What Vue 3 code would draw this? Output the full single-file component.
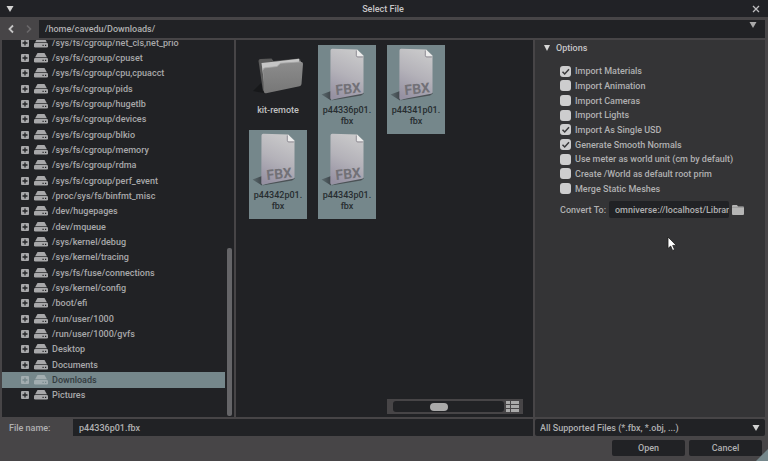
<script setup>
import { ref } from 'vue'

const path = ref('/home/cavedu/Downloads/')
const fileName = ref('p44336p01.fbx')
const target = ref('omniverse://localhost/Library')
const zoom = ref(40)
const current = ref('Downloads')
const optionsOpen = ref(true)

const places = [
  '/sys/fs/cgroup/net_cls,net_prio', '/sys/fs/cgroup/cpuset', '/sys/fs/cgroup/cpu,cpuacct',
  '/sys/fs/cgroup/pids', '/sys/fs/cgroup/hugetlb', '/sys/fs/cgroup/devices', '/sys/fs/cgroup/blkio',
  '/sys/fs/cgroup/memory', '/sys/fs/cgroup/rdma', '/sys/fs/cgroup/perf_event',
  '/proc/sys/fs/binfmt_misc', '/dev/hugepages', '/dev/mqueue', '/sys/kernel/debug',
  '/sys/kernel/tracing', '/sys/fs/fuse/connections', '/sys/kernel/config', '/boot/efi',
  '/run/user/1000', '/run/user/1000/gvfs', 'Desktop', 'Documents', 'Downloads', 'Pictures'
]

const files = ref([
  { lines: ['kit-remote'], folder: true, selected: false },
  { lines: ['p44336p01.', 'fbx'], selected: true },
  { lines: ['p44341p01.', 'fbx'], selected: true },
  { lines: ['p44342p01.', 'fbx'], selected: true },
  { lines: ['p44343p01.', 'fbx'], selected: true }
])

const options = ref([
  { label: 'Import Materials', on: true },
  { label: 'Import Animation', on: false },
  { label: 'Import Cameras', on: false },
  { label: 'Import Lights', on: false },
  { label: 'Import As Single USD', on: true },
  { label: 'Generate Smooth Normals', on: true },
  { label: 'Use meter as world unit (cm by default)', on: false },
  { label: 'Create /World as default root prim', on: false },
  { label: 'Merge Static Meshes', on: false }
])
</script>

<template>
  <main class="dialog">
    <header class="titlebar">
      <button class="plain" aria-label="Window menu">
        <svg width="8" height="8" viewBox="0 0 8 8"><path d="M0.5 1h7L4 7z" fill="#d2d2d2" /></svg>
      </button>
      <h1>Select File</h1>
      <button class="plain" aria-label="Close">
        <svg width="8" height="8" viewBox="0 0 8 8"><path d="M1 1l6 6M7 1L1 7" stroke="#bdbdbf" stroke-width="1.3" /></svg>
      </button>
    </header>

    <nav class="pathbar">
      <button class="plain step" aria-label="Back">
        <svg width="8" height="10" viewBox="0 0 8 10"><path d="M6 1.5L2.5 5 6 8.500" fill="none" stroke="#c4c4c4" stroke-width="1.8" /></svg>
      </button>
      <button class="plain step" aria-label="Forward">
        <svg width="8" height="10" viewBox="0 0 8 10"><path d="M2 1.500L5.500 5 2 8.500" fill="none" stroke="#6b696b" stroke-width="1.600" /></svg>
      </button>
      <div class="pathfield">
        <input v-model="path" aria-label="Path" />
        <button class="plain drop" aria-label="Recent paths">
          <svg width="8" height="8" viewBox="0 0 8 8"><path d="M0.500 1h7L4 7z" fill="#aaa" /></svg>
        </button>
      </div>
    </nav>

    <section class="body">
      <div class="tree">
        <ul>
          <li v-for="p in places" :key="p">
            <button class="plain place" :class="{ active: p === current }" @click="current = p">
              <svg class="plus" width="8" height="8" viewBox="0 0 8 8">
                <rect width="8" height="8" rx="1" fill="currentColor" />
                <path class="cross" d="M4 1.500v5M1.500 4h5" stroke-width="1.300" />
              </svg>
              <svg class="drive" width="14" height="10" viewBox="0 0 14 10">
                <path d="M3.500 0h7L13 4.500H1z" fill="currentColor" />
                <path class="seam" d="M0.500 5h13" stroke-width="0.800" />
                <rect y="5" width="14" height="4.600" rx="1.300" fill="currentColor" />
                <path class="dots" d="M8.500 7.300h1.200M11 7.300h1.200" stroke-width="1.200" />
              </svg>
              <span>{{ p }}</span>
            </button>
          </li>
        </ul>
        <div class="scrollbar"></div>
      </div>

      <div class="browser">
        <div class="files">
          <button
            v-for="f in files" :key="f.lines[0]" class="plain tile" :class="{ selected: f.selected }"
            @click="f.selected = !f.selected"
          >
            <svg v-if="f.folder" width="58" height="58" viewBox="0 0 58 58">
              <defs>
                <linearGradient id="folder-front" x1="0" y1="0" x2="0" y2="1">
                  <stop offset="0" stop-color="#8c8c8c" /><stop offset="1" stop-color="#777" />
                </linearGradient>
              </defs>
              <path d="M4 46l8-8 3 10z" fill="#17181a" />
              <path d="M9.500 16q0-2 2-2l11-.6 2 2.600 25-2.500q2 0 2 2V20L14 46z" fill="#5a5a5a" />
              <path d="M12.500 18L27 16.500l23-2.700.600 5L16 45z" fill="#c6c6c6" />
              <path d="M14 25q0-2 2-2.200l12-1.300 3.500-3.300L51 16.800q3-.2 3 2L52.500 39q-.2 1.800-2 2.200L17 48.300q-2 .3-2.200-2z" fill="url(#folder-front)" />
              <path d="M14 25q0-2 2-2.200l12-1.300 3.500-3.300L52 16.900" fill="none" stroke="#aaa" stroke-width="0.800" />
            </svg>
            <svg v-else width="58" height="58" viewBox="0 0 58 58">
              <defs>
                <linearGradient id="sheet" x1="0.600" y1="0" x2="0.300" y2="1">
                  <stop offset="0" stop-color="#c9c9ca" /><stop offset="0.500" stop-color="#b4b2b9" />
                  <stop offset="1" stop-color="#9691a2" />
                </linearGradient>
                <linearGradient id="shade" x1="0" y1="0" x2="1" y2="0">
                  <stop offset="0" stop-color="#5c6b6f" /><stop offset="1" stop-color="#3e454a" />
                </linearGradient>
              </defs>
              <path d="M3.500 49.500L13 46v9.500z" fill="url(#shade)" />
              <path d="M13 55.500l30-5 3-2-6-3z" fill="#4b5256" />
              <path d="M12.500 5.500q0-1.700 1.700-1.700L39 4.500l6.500 6V47q0 1.500-1.500 1.800L14 54.500q-1.700.2-1.700-1.500z" fill="url(#sheet)" />
              <path d="M39 4.500l6.500 6.500-5.500.3q-1.200 0-1.200-1.200z" fill="#ececec" />
              <path d="M38.300 5.500v5q0 1.500 1.500 1.500h5" fill="none" stroke="#85828a" stroke-width="0.800" />
              <text x="18" y="50" transform="rotate(-6 18 50)" class="badge">FBX</text>
            </svg>
            <span v-for="l in f.lines" :key="l">{{ l }}</span>
          </button>
        </div>
        <div class="zoombar">
          <input v-model="zoom" type="range" min="0" max="100" aria-label="Thumbnail size" />
          <button class="plain" aria-label="List view">
            <svg width="13" height="11" viewBox="0 0 13 11" fill="#aaa">
              <path d="M0 0h4v3H0zM5 0h8v3H5zM0 4h4v3H0zM5 4h8v3H5zM0 8h4v3H0zM5 8h8v3H5z" />
            </svg>
          </button>
        </div>
      </div>

      <aside class="options">
        <button class="plain heading" :aria-expanded="optionsOpen" @click="optionsOpen = !optionsOpen">
          <svg width="8" height="8" viewBox="0 0 8 8"><path d="M1 1h6L4 7z" fill="#d6d6d6" /></svg>
          <span>Options</span>
        </button>
        <div v-if="optionsOpen" class="settings">
          <div class="checks">
            <label v-for="o in options" :key="o.label">
              <span class="box">
                <input v-model="o.on" type="checkbox" />
                <svg v-if="o.on" width="11" height="11" viewBox="0 0 11 11">
                  <path d="M2.500 5.700L4.700 8 9 3.300" fill="none" stroke="#38383a" stroke-width="1.500" />
                </svg>
              </span>
              <span>{{ o.label }}</span>
            </label>
          </div>
          <div class="convert">
            <label for="target">Convert To:</label>
            <input id="target" v-model="target" />
            <button class="plain" aria-label="Choose folder">
              <svg width="12" height="10" viewBox="0 0 12 10">
                <path d="M0 1q0-1 1-1h4l1 1.500h5q1 0 1 1V9q0 1-1 1H1q-1 0-1-1z" fill="#b5b5b5" />
                <path d="M0 2.300h12" stroke="#858585" stroke-width="0.600" />
              </svg>
            </button>
          </div>
        </div>
      </aside>
    </section>

    <footer>
      <div class="namerow">
        <label for="name">File name:</label>
        <input id="name" v-model="fileName" />
        <div class="filter">
          <select aria-label="File type"><option>All Supported Files (*.fbx, *.obj, ...)</option></select>
          <svg width="8" height="8" viewBox="0 0 8 8"><path d="M0.500 1h7L4 7z" fill="#d2d2d2" /></svg>
        </div>
      </div>
      <div class="actions">
        <button>Open</button>
        <button>Cancel</button>
      </div>
    </footer>

    <svg class="grip" width="12" height="12" viewBox="0 0 12 12"><path d="M12 0v12H0z" fill="#75878b" /></svg>
    <svg class="pointer" width="11" height="16" viewBox="0 0 11 16">
      <path d="M1 1v11.500l2.700-2.400 1.900 4.400 2-.9-1.900-4.200h3.600z" fill="#fff" stroke="#1c1c1c" stroke-width="0.800" />
    </svg>
  </main>
</template>

<style>
body {
  background: #474547;
}
</style>

<style scoped>
.dialog {
  position: relative;
  display: flex;
  flex-direction: column;
  min-height: 100vh;
  overflow: hidden;
  background: #474547;
  color: #b0b0b1;
  font: 500 9px/14px Roboto, "Liberation Sans", sans-serif;
}
.dialog * {
  box-sizing: border-box;
}
button, input, select {
  margin: 0;
  border: 0;
  border-radius: 0;
  font: inherit;
  color: inherit;
  outline: none;
}
input, select {
  min-width: 0;
  background: #212225;
  appearance: none;
}
svg {
  display: block;
  flex: none;
}
.plain {
  padding: 0;
  background: none;
}
.titlebar {
  display: flex;
  align-items: center;
  justify-content: space-between;
  height: 17px;
  padding: 0 8px 0 6px;
  background: #212226;
}
h1 {
  margin: 0;
  font: inherit;
  color: #c6c6c7;
}
.pathbar {
  display: flex;
  align-items: stretch;
  height: 18px;
  margin: 3px 3px 2px 2px;
}
.step {
  display: grid;
  place-items: center;
  width: 18px;
}
.pathfield {
  display: flex;
  flex: 1;
  margin-left: 1px;
  padding: 0 8px 0 6px;
  background: #212225;
}
.pathfield input {
  flex: 1;
  padding: 0;
}
.drop {
  align-self: flex-start;
  padding-top: 1px;
}
.body {
  display: grid;
  flex: 1;
  grid-template-columns: 232px 1fr 230px;
  column-gap: 2px;
  margin: 0 3px 2px 2px;
}
.tree {
  display: flex;
  overflow: hidden;
  background: #212225;
}
ul {
  display: grid;
  flex: 1;
  grid-auto-rows: 1fr;
  margin: -5px 2px 14px 0;
  padding: 0;
  list-style: none;
}
li {
  display: grid;
}
.place {
  display: flex;
  align-items: center;
  padding-left: 19px;
  color: #a8a8aa;
}
.plus {
  margin-right: 5px;
}
.drive {
  margin-right: 4px;
}
.cross, .seam, .dots {
  stroke: #212225;
}
.active {
  background: #75878b;
  color: #a2adb0;
}
.active span {
  color: #333b3e;
}
.active .cross, .active .seam, .active .dots {
  stroke: #75878b;
}
.scrollbar {
  align-self: flex-end;
  width: 5px;
  height: 168px;
  margin: 0 2px 1px 0;
  border-radius: 2px;
  background: #656568;
}
.browser {
  display: flex;
  flex-direction: column;
  justify-content: space-between;
  background: #212225;
}
.files {
  display: grid;
  grid-template-columns: repeat(3, 58px);
  grid-auto-rows: 85px;
  column-gap: 11px;
  padding: 5px 13px;
}
.tile {
  display: flex;
  flex-direction: column;
  align-items: center;
  height: 89px;
  line-height: 11px;
  color: #c0c0c1;
}
.tile svg {
  margin-bottom: 2px;
}
.tile span {
  white-space: nowrap;
}
.selected {
  background: #75878b;
  color: #272d30;
}
.badge {
  font: 700 14px Roboto, sans-serif;
  fill: #727177;
}
.zoombar {
  display: flex;
  align-items: center;
  align-self: flex-end;
  gap: 2px;
  margin: 0 10px 3px;
  padding: 2px 4px 2px 6px;
  background: #474547;
}
.zoombar input {
  width: 111px;
  height: 11px;
  border-radius: 3px;
}
.zoombar input::-webkit-slider-thumb {
  width: 18px;
  height: 8px;
  border-radius: 4px;
  background: #aaa;
  appearance: none;
}
.options {
  background: #343436;
}
.heading {
  display: flex;
  align-items: center;
  gap: 5px;
  padding: 1px 0 0 8px;
  color: #c6c6c7;
}
.settings {
  padding: 9px 21px 0 25px;
}
.checks {
  display: grid;
  grid-auto-rows: 1fr;
  height: 132px;
}
.checks label {
  display: flex;
  align-items: center;
  gap: 4px;
  white-space: nowrap;
}
.box {
  display: grid;
}
.box > * {
  grid-area: 1 / 1;
}
.box input {
  width: 11px;
  height: 11px;
  border-radius: 3px;
  background: #cdcdce;
}
.box svg {
  pointer-events: none;
}
.convert {
  display: flex;
  align-items: center;
  gap: 3px;
  margin-top: 5px;
  white-space: nowrap;
}
.convert input {
  flex: 1;
  height: 17px;
  padding: 0 0 0 6px;
  border-radius: 2px;
}
.namerow {
  display: flex;
  height: 17px;
  margin-right: 3px;
}
.namerow label {
  width: 73px;
  padding: 2px 0 0 9px;
}
.namerow > input {
  flex: 1;
  padding: 0 6px;
}
.filter {
  display: grid;
  align-items: center;
  width: 230px;
  margin-left: 2px;
}
.filter > * {
  grid-area: 1 / 1;
}
.filter select {
  height: 17px;
  padding: 0 5px;
  border-radius: 2px;
}
.filter svg {
  justify-self: end;
  margin-right: 5px;
  pointer-events: none;
}
.actions {
  display: flex;
  justify-content: flex-end;
  gap: 4px;
  padding: 4px 6px 5px;
}
.actions button {
  width: 73px;
  height: 16px;
  padding: 0;
  border-radius: 2px;
  background: #212225;
}
.grip {
  position: absolute;
  right: 0;
  bottom: 0;
}
.pointer {
  position: absolute;
  left: 667px;
  top: 236px;
}
</style>
